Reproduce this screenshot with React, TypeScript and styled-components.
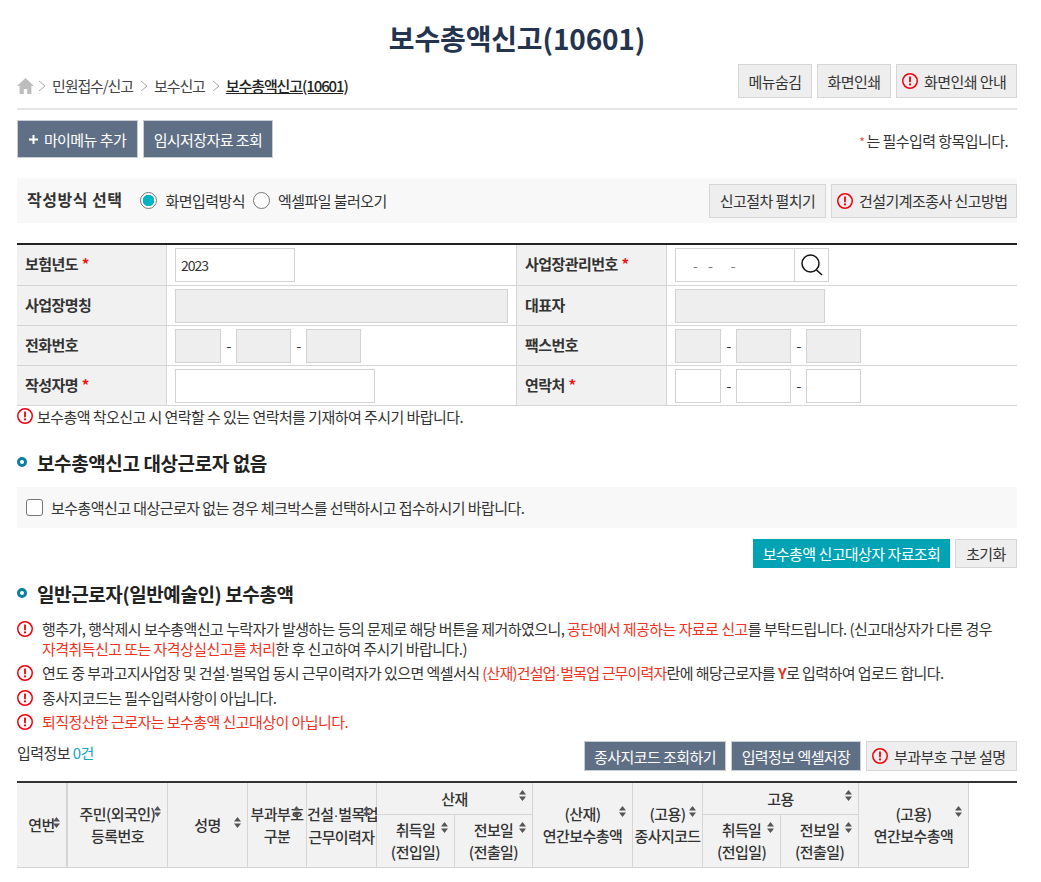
import React from "react";
import styled, { createGlobalStyle } from "styled-components";

const Global = createGlobalStyle`
  html, body { margin: 0; padding: 0; background: #fff; }
  body { font-family: "Noto Sans CJK KR", "Noto Sans", sans-serif; font-size: 15px; color: #333; letter-spacing: -0.56px; }
  * { box-sizing: border-box; }
`;

const Page = styled.div`
  width: 1000px;
  margin-left: 17px;
  padding-top: 16px;
`;
const Title = styled.h1`
  margin: 0;
  height: 48px;
  line-height: 44px;
  font-size: 28px;
  font-weight: 700;
  color: #24344f;
  text-align: center;
  letter-spacing: -0.15px;
`;
const TopBar = styled.div`
  display: flex;
  justify-content: space-between;
  align-items: flex-start;
  height: 46px;
  padding-bottom: 10px;
  border-bottom: 2px solid #e5e5e5;
`;
const Crumbs = styled.div`
  display: flex;
  align-items: center;
  height: 34px;
  margin-top: 5px;
  gap: 6px;
  line-height: 20px;
  color: #444;
  letter-spacing: -1.1px;
  & > svg:first-child { margin-right: -2px; }
`;
const Crumb = styled.span`
  margin-right: 1px;
`;
const CrumbStrong = styled.span`
  color: #222;
  font-weight: 500;
  text-decoration: underline;
`;
const BtnRow = styled.div`
  display: flex;
  gap: 5px;
`;
const Btn = styled.button<{ $kind?: "gray" | "dark" | "teal"; $w: number; $h?: number; $alert?: boolean }>`
  display: inline-flex;
  align-items: center;
  justify-content: ${(p) => (p.$alert ? "flex-start" : "center")};
  gap: 6px;
  width: ${(p) => p.$w}px;
  height: ${(p) => p.$h ?? 34}px;
  padding: 0 0 0 ${(p) => (p.$alert ? 5 : 0)}px;
  border: 1px solid ${(p) => (p.$kind === "teal" ? "#00a3b4" : p.$kind === "dark" ? "#c9ced4" : "#d6d6d6")};
  background: ${(p) => (p.$kind === "teal" ? "#00a3b4" : p.$kind === "dark" ? "#5f7086" : "#eeeeee")};
  color: ${(p) => (p.$kind === "teal" || p.$kind === "dark" ? "#fff" : "#333")};
  font: inherit;
  letter-spacing: inherit;
  white-space: nowrap;
`;
const ActionBar = styled.div`
  display: flex;
  justify-content: space-between;
  align-items: center;
  margin-top: 10px;
  height: 38px;
`;
const Required = styled.div`
  padding: 3px 9px 0 0;
  color: #333;
`;
const SmallStar = styled.span`
  color: #e8503a;
  font-size: 12px;
  margin-right: 2px;
`;
const MethodBox = styled.div`
  display: flex;
  align-items: center;
  justify-content: space-between;
  margin-top: 20px;
  height: 45px;
  padding: 0 0 0 10px;
  background: #f8f8f8;
`;
const MethodLeft = styled.div`
  display: flex;
  align-items: center;
`;
const MethodTitle = styled.strong`
  font-size: 16px;
  font-weight: 700;
  letter-spacing: 0.5px;
  color: #333;
  margin: -3px 18px 0 0;
`;
const Radio = styled.input`
  appearance: none;
  width: 17px;
  height: 17px;
  margin: 0 8px 0 0;
  border-radius: 50%;
  border: 1px solid #767676;
  background: #fff;
  &:checked { background: radial-gradient(circle, #00b4c8 0 5.5px, #fff 6px); }
`;
const RadioLabel = styled.label`
  display: flex;
  align-items: center;
  margin-right: 8px;
`;
const FormTable = styled.table`
  width: 1000px;
  margin-top: 20px;
  table-layout: fixed;
  border-collapse: separate;
  border-spacing: 0;
  border-top: 2px solid #222;
`;
const LabelCell = styled.th<{ $tall?: boolean; $split?: boolean }>`
  height: ${(p) => (p.$tall ? 41 : 40)}px;
  padding: 0 0 3px 8px;
  background: #f1f1f1;
  border-bottom: 1px solid #d5d5d5;
  border-right: 1px solid #d5d5d5;
  border-left: ${(p) => (p.$split ? "1px solid #d5d5d5" : "0")};
  font-weight: 700;
  text-align: left;
  color: #333;
`;
const ValueCell = styled.td`
  height: 40px;
  padding: 0 0 0 8px;
  border-bottom: 1px solid #d5d5d5;
`;
const Star = styled.span`
  color: #f01414;
  margin-left: 1px;
`;
const Field = styled.input<{ $w: number; $off?: boolean }>`
  display: block;
  width: ${(p) => p.$w}px;
  height: 34px;
  padding: 0 5px;
  border: 1px solid #d2d2d2;
  background: ${(p) => (p.$off ? "#eeeeee" : "#fff")};
  font: inherit;
  font-size: 14px;
  letter-spacing: -1px;
  color: #333;
  outline: none;
`;
const FieldRow = styled.div`
  display: flex;
  align-items: center;
`;
const Dash = styled.span`
  width: 15px;
  text-align: center;
`;
const SearchField = styled(Field)`
  padding-left: 17px;
  color: #777;
  border-right: 0;
  letter-spacing: -0.5px;
`;
const SearchBtn = styled.button`
  display: flex;
  align-items: center;
  justify-content: center;
  width: 35px;
  height: 34px;
  padding: 0;
  background: #fff;
  border: 1px solid #d2d2d2;
`;
const Note = styled.div`
  display: flex;
  align-items: center;
  gap: 4px;
  height: 22px;
  padding-bottom: 2px;
`;
const SectionTitle = styled.h2<{ $gap?: number }>`
  display: flex;
  align-items: center;
  gap: 10px;
  margin: ${(p) => p.$gap ?? 20}px 0 0;
  height: 30px;
  padding-bottom: 2px;
  font-size: 19px;
  font-weight: 700;
  color: #222;
  letter-spacing: -0.4px;
`;
const Dot = styled.i`
  width: 10px;
  height: 10px;
  border-radius: 50%;
  border: 3px solid #0b7f9f;
`;
const CheckBox = styled.div`
  display: flex;
  align-items: center;
  gap: 8px;
  margin-top: 9px;
  height: 41px;
  padding-left: 9px;
  background: #f8f8f8;
`;
const Check = styled.input`
  appearance: none;
  width: 17px;
  height: 17px;
  margin: 0;
  border: 1px solid #767676;
  border-radius: 3px;
  background: #fff;
`;
const QueryRow = styled.div`
  display: flex;
  justify-content: flex-end;
  gap: 5px;
  margin-top: 11px;
`;
const Notices = styled.ul`
  list-style: none;
  margin: 10px 0 0;
  padding: 0;
`;
const Notice = styled.li`
  display: flex;
  gap: 9px;
  margin-bottom: 4px;
  line-height: 20px;
  & > svg { margin-top: 2px; }
`;
const NoticeText = styled.span<{ $red?: boolean }>`
  color: ${(p) => (p.$red ? "#f0321e" : "#333")};
`;
const Red = styled.span`
  color: #f0321e;
`;
const RedTight = styled(Red)`
  letter-spacing: -0.85px;
`;
const RedBold = styled(Red)`
  font-weight: 700;
`;
const MidDot = styled.span`
  font-family: "Liberation Sans", sans-serif;
  letter-spacing: -0.3px;
`;
const InfoBar = styled.div`
  display: flex;
  justify-content: space-between;
  align-items: flex-start;
  margin-top: 9px;
`;
const Count = styled.span`
  margin-top: 2px;
  line-height: 20px;
`;
const CountNum = styled.span`
  color: #14a5c4;
`;
const GridTable = styled.table`
  width: 1000px;
  margin-top: 10px;
  table-layout: fixed;
  border-collapse: separate;
  border-spacing: 0;
  border-top: 2px solid #333;
`;
const Head = styled.th<{ $thick?: boolean; $h?: number }>`
  position: relative;
  height: ${(p) => p.$h ?? 32}px;
  padding: 0;
  background: #f2f2f2;
  border-right: ${(p) => (p.$thick ? 2 : 1)}px solid #d5d5d5;
  border-bottom: 1px solid #d5d5d5;
  font-weight: 500;
  color: #333;
  line-height: 22px;
  text-align: center;
  white-space: nowrap;
  overflow: visible;
`;
const Sort = styled.svg<{ $top: number }>`
  position: absolute;
  right: 6px;
  top: ${(p) => p.$top}px;
  width: 7px;
  height: 11px;
`;

const Alert = () => (
  <svg width="16" height="16" viewBox="0 0 16 16" style={{ flex: "none" }}>
    <circle cx="8" cy="8" r="7.250" fill="none" stroke="#f0000f" strokeWidth="1.500" />
    <path d="M8 3.600v5.600" stroke="#f0000f" strokeWidth="1.800" />
    <circle cx="8" cy="11.400" r="1.100" fill="#f0000f" />
  </svg>
);
const Chevron = () => (
  <svg width="8" height="12" viewBox="0 0 8 12">
    <path d="M1 1l6 5-6 5" fill="none" stroke="#aaa" />
  </svg>
);
const Home = () => (
  <svg width="17" height="16" viewBox="0 0 17 16">
    <path d="M8.500 0L0 8h2.600v8h4.200v-5h3.400v5h4.200V8H17z" fill="#bdbdbd" />
  </svg>
);
const Plus = () => (
  <svg width="9" height="9" viewBox="0 0 9 9" style={{ flex: "none" }}>
    <path d="M4.500 0v9M0 4.500h9" stroke="#fff" strokeWidth="2" />
  </svg>
);
const SortIcon = ({ top }: { top: number }) => (
  <Sort $top={top} viewBox="0 0 7 11">
    <path d="M3.500 0L7 4.500H0zM0 6.500h7L3.500 11z" fill="#555" />
  </Sort>
);

export default function App() {
  return (
    <>
      <Global />
      <Page>
        <Title>보수총액신고(10601)</Title>
        <TopBar>
          <Crumbs>
            <Home />
            <Chevron />
            <Crumb>민원접수/신고</Crumb>
            <Chevron />
            <Crumb>보수신고</Crumb>
            <Chevron />
            <CrumbStrong>보수총액신고(10601)</CrumbStrong>
          </Crumbs>
          <BtnRow>
            <Btn $w={74}>메뉴숨김</Btn>
            <Btn $w={74}>화면인쇄</Btn>
            <Btn $w={121} $alert>
              <Alert />
              화면인쇄 안내
            </Btn>
          </BtnRow>
        </TopBar>
        <ActionBar>
          <BtnRow>
            <Btn $kind="dark" $w={121} $h={38}><Plus />마이메뉴 추가</Btn>
            <Btn $kind="dark" $w={130} $h={38}>임시저장자료 조회</Btn>
          </BtnRow>
          <Required>
            <SmallStar>*</SmallStar>는 필수입력 항목입니다.
          </Required>
        </ActionBar>
        <MethodBox>
          <MethodLeft>
            <MethodTitle>작성방식 선택</MethodTitle>
            <RadioLabel>
              <Radio type="radio" name="method" defaultChecked />
              화면입력방식
            </RadioLabel>
            <RadioLabel>
              <Radio type="radio" name="method" />
              엑셀파일 불러오기
            </RadioLabel>
          </MethodLeft>
          <BtnRow>
            <Btn $w={117}>신고절차 펼치기</Btn>
            <Btn $w={186} $alert>
              <Alert />
              건설기계조종사 신고방법
            </Btn>
          </BtnRow>
        </MethodBox>
        <FormTable>
          <colgroup>
            <col width="150" />
            <col width="349" />
            <col width="151" />
            <col width="350" />
          </colgroup>
          <tbody>
            <tr>
              <LabelCell $tall>보험년도 <Star>*</Star></LabelCell>
              <ValueCell>
                <Field $w={120} defaultValue="2023" />
              </ValueCell>
              <LabelCell $tall $split>사업장관리번호 <Star>*</Star></LabelCell>
              <ValueCell>
                <FieldRow>
                  <SearchField $w={119} defaultValue="-    -       -" />
                  <SearchBtn aria-label="검색">
                    <svg width="24" height="24" viewBox="0 0 24 24">
                      <circle cx="10.500" cy="10.500" r="8.500" fill="none" stroke="#111" strokeWidth="1.500" />
                      <path d="M16.500 17l5.500 5" stroke="#111" strokeWidth="1.500" />
                    </svg>
                  </SearchBtn>
                </FieldRow>
              </ValueCell>
            </tr>
            <tr>
              <LabelCell>사업장명칭</LabelCell>
              <ValueCell>
                <Field $w={333} $off readOnly />
              </ValueCell>
              <LabelCell $split>대표자</LabelCell>
              <ValueCell>
                <Field $w={150} $off readOnly />
              </ValueCell>
            </tr>
            <tr>
              <LabelCell>전화번호</LabelCell>
              <ValueCell>
                <FieldRow>
                  <Field $w={46} $off readOnly />
                  <Dash>-</Dash>
                  <Field $w={55} $off readOnly />
                  <Dash>-</Dash>
                  <Field $w={55} $off readOnly />
                </FieldRow>
              </ValueCell>
              <LabelCell $split>팩스번호</LabelCell>
              <ValueCell>
                <FieldRow>
                  <Field $w={46} $off readOnly />
                  <Dash>-</Dash>
                  <Field $w={55} $off readOnly />
                  <Dash>-</Dash>
                  <Field $w={55} $off readOnly />
                </FieldRow>
              </ValueCell>
            </tr>
            <tr>
              <LabelCell>작성자명 <Star>*</Star></LabelCell>
              <ValueCell>
                <Field $w={200} />
              </ValueCell>
              <LabelCell $split>연락처 <Star>*</Star></LabelCell>
              <ValueCell>
                <FieldRow>
                  <Field $w={46} />
                  <Dash>-</Dash>
                  <Field $w={55} />
                  <Dash>-</Dash>
                  <Field $w={55} />
                </FieldRow>
              </ValueCell>
            </tr>
          </tbody>
        </FormTable>
        <Note>
          <Alert />
          보수총액 착오신고 시 연락할 수 있는 연락처를 기재하여 주시기 바랍니다.
        </Note>
        <SectionTitle>
          <Dot />
          보수총액신고 대상근로자 없음
        </SectionTitle>
        <CheckBox>
          <Check type="checkbox" />
          보수총액신고 대상근로자 없는 경우 체크박스를 선택하시고 접수하시기 바랍니다.
        </CheckBox>
        <QueryRow>
          <Btn $kind="teal" $w={197} $h={29}>보수총액 신고대상자 자료조회</Btn>
          <Btn $w={62} $h={29}>초기화</Btn>
        </QueryRow>
        <SectionTitle $gap={11}>
          <Dot />
          일반근로자(일반예술인) 보수총액
        </SectionTitle>
        <Notices>
          <Notice>
            <Alert />
            <NoticeText>
              행추가, 행삭제시 보수총액신고 누락자가 발생하는 등의 문제로 해당 버튼을 제거하였으니, <Red>공단에서 제공하는 자료로 신고</Red>를 부탁드립니다. (신고대상자가 다른 경우
              <br />
              <Red>자격취득신고 또는 자격상실신고를 처리</Red>한 후 신고하여 주시기 바랍니다.)
            </NoticeText>
          </Notice>
          <Notice>
            <Alert />
            <NoticeText>
              연도 중 부과고지사업장 및 건설<MidDot>·</MidDot>벌목업 동시 근무이력자가 있으면 엑셀서식 <RedTight>(산재)건설업<MidDot>·</MidDot>벌목업 근무이력자</RedTight>란에 해당근로자를 <RedBold>Y</RedBold>로 입력하여 업로드 합니다.
            </NoticeText>
          </Notice>
          <Notice>
            <Alert />
            <NoticeText>종사지코드는 필수입력사항이 아닙니다.</NoticeText>
          </Notice>
          <Notice>
            <Alert />
            <NoticeText $red>퇴직정산한 근로자는 보수총액 신고대상이 아닙니다.</NoticeText>
          </Notice>
        </Notices>
        <InfoBar>
          <Count>
            입력정보 <CountNum>0건</CountNum>
          </Count>
          <BtnRow>
            <Btn $kind="dark" $w={142} $h={30}>종사지코드 조회하기</Btn>
            <Btn $kind="dark" $w={130} $h={30}>입력정보 엑셀저장</Btn>
            <Btn $w={151} $h={30} $alert>
              <Alert />
              부과부호 구분 설명
            </Btn>
          </BtnRow>
        </InfoBar>
        <GridTable>
          <colgroup>
            <col width="51" />
            <col width="100" />
            <col width="80" />
            <col width="59" />
            <col width="70" />
            <col width="78" />
            <col width="78" />
            <col width="100" />
            <col width="70" />
            <col width="78" />
            <col width="78" />
            <col width="110" />
            <col width="48" />
          </colgroup>
          <thead>
            <tr>
              <Head rowSpan={2} $thick>연번<SortIcon top={34} /></Head>
              <Head rowSpan={2}>주민(외국인)<br />등록번호<SortIcon top={23} /></Head>
              <Head rowSpan={2}>성명<SortIcon top={34} /></Head>
              <Head rowSpan={2}>부과부호<br />구분<SortIcon top={23} /></Head>
              <Head rowSpan={2}>건설<MidDot>·</MidDot>벌목업<br />근무이력자<SortIcon top={23} /></Head>
              <Head colSpan={2}>산재<SortIcon top={7} /></Head>
              <Head rowSpan={2}>(산재)<br />연간보수총액<SortIcon top={23} /></Head>
              <Head rowSpan={2}>(고용)<br />종사지코드<SortIcon top={23} /></Head>
              <Head colSpan={2}>고용<SortIcon top={7} /></Head>
              <Head rowSpan={2}>(고용)<br />연간보수총액<SortIcon top={23} /></Head>
            </tr>
            <tr>
              <Head $h={53}>취득일<br />(전입일)<SortIcon top={7} /></Head>
              <Head $h={53}>전보일<br />(전출일)<SortIcon top={7} /></Head>
              <Head $h={53}>취득일<br />(전입일)<SortIcon top={7} /></Head>
              <Head $h={53}>전보일<br />(전출일)<SortIcon top={7} /></Head>
            </tr>
          </thead>
        </GridTable>
      </Page>
    </>
  );
}
